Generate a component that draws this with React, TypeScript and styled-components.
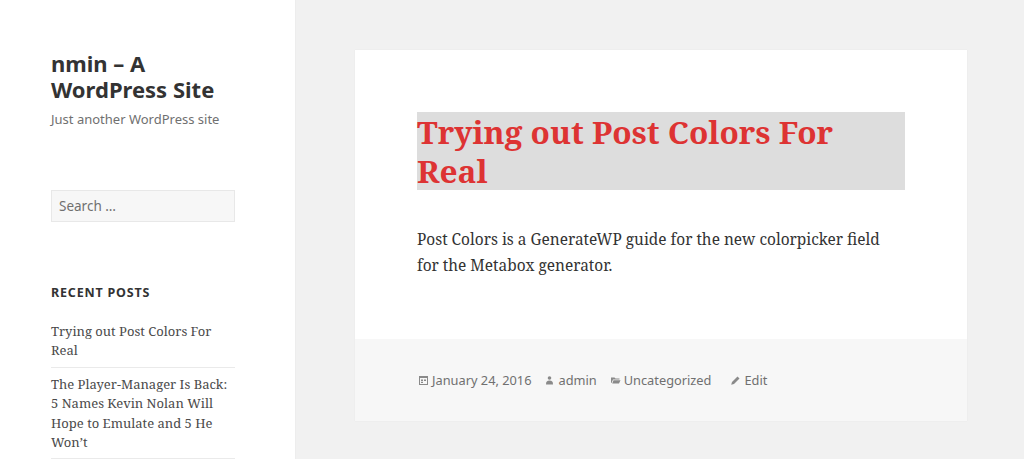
import styled, { createGlobalStyle } from "styled-components";

const GlobalStyle = createGlobalStyle`
  html, body {
    margin: 0;
    padding: 0;
    height: 459px;
    overflow: hidden;
    background: #f1f1f1;
  }
`;

const serif = `"Noto Serif", "DejaVu Serif", serif`;
const sans = `"Noto Sans", "Open Sans", sans-serif`;

const Page = styled.div`
  display: flex;
  height: 459px;
  overflow: hidden;
  background: #f1f1f1;
`;

const Sidebar = styled.aside`
  flex: 0 0 295px;
  width: 295px;
  height: 459px;
  overflow: hidden;
  box-sizing: border-box;
  padding: 50px 0 0 51px;
  background: #ffffff;
  box-shadow: 0 0 1px rgba(0, 0, 0, 0.1);
`;

const SiteTitle = styled.h1`
  width: 184px;
  margin: 0;
  font: 700 22px/26px ${sans};
  color: #333333;
`;

const Tagline = styled.p`
  margin: 7px 0 0;
  font: 400 13px/20px ${sans};
  color: #707070;
  white-space: nowrap;
`;

const SearchField = styled.div`
  width: 184px;
  height: 32px;
  box-sizing: border-box;
  margin-top: 61px;
  padding: 0 7px;
  background: #f7f7f7;
  border: 1px solid #e8e8e8;
  font: 400 13.5px/30px ${sans};
  color: #707070;
`;

const WidgetTitle = styled.h2`
  margin: 62px 0 0;
  font: 700 12.5px/18px ${sans};
  letter-spacing: 0.8px;
  text-transform: uppercase;
  color: #333333;
`;

const PostList = styled.ul`
  width: 184px;
  margin: 20px 0 0;
  padding: 0;
  list-style: none;
`;

const PostItem = styled.li`
  padding: 0 0 6px;
  margin-bottom: 7px;
  border-bottom: 1px solid #eaeaea;
  font: 400 13px/19.4px ${serif};
  color: #4a4a4a;
`;

const Main = styled.main`
  flex: 1;
  padding: 50px 0 0 60px;
`;

const Card = styled.article`
  width: 612px;
  height: 371px;
  display: flex;
  flex-direction: column;
  box-sizing: border-box;
  background: #ffffff;
  box-shadow: 0 0 1px rgba(0, 0, 0, 0.08);
`;

const CardBody = styled.div`
  flex: 1;
  padding: 62px 62px 0;
`;

const PostTitle = styled.h2`
  margin: 0;
  padding: 0;
  font: 700 31.6px/39px ${serif};
  color: #dd3333;
  background: #dddddd;
`;

const Excerpt = styled.p`
  margin: 37px 0 0;
  max-width: 480px;
  font: 400 15.43px/26px ${serif};
  color: #333333;
`;

const CardFooter = styled.footer`
  flex: 0 0 82px;
  display: flex;
  align-items: flex-start;
  box-sizing: border-box;
  padding: 31px 62px 0 63px;
  background: #f7f7f7;
`;

const Meta = styled.span<{ $gap: number }>`
  display: inline-flex;
  align-items: center;
  gap: 3px;
  margin-right: ${(p) => p.$gap}px;
  font: 400 12.8px/20px ${sans};
  color: #707070;
`;

const MetaIcon = styled.svg`
  width: 11px;
  height: 11px;
  fill: #8a8a8a;
`;

export default function App() {
  return (
    <>
      <GlobalStyle />
      <Page>
        <Sidebar>
          <SiteTitle>nmin – A WordPress Site</SiteTitle>
          <Tagline>Just another WordPress site</Tagline>
          <SearchField>Search …</SearchField>
          <WidgetTitle>Recent Posts</WidgetTitle>
          <PostList>
            <PostItem>Trying out Post Colors For Real</PostItem>
            <PostItem>
              The Player-Manager Is Back: 5 Names Kevin Nolan Will Hope to
              Emulate and 5 He Won’t
            </PostItem>
          </PostList>
        </Sidebar>
        <Main>
          <Card>
            <CardBody>
              <PostTitle>Trying out Post Colors For Real</PostTitle>
              <Excerpt>
                Post Colors is a GenerateWP guide for the new colorpicker field
                for the Metabox generator.
              </Excerpt>
            </CardBody>
            <CardFooter>
              <Meta $gap={13}>
                <MetaIcon viewBox="0 0 11 11">
                  <path
                    fillRule="evenodd"
                    d="M1 1h9v9H1zM2 3v6h7V3zM3 4.500h2v1.500H3zM6 4.500h2v1.500H6zM3 6.800h2v1.200H3z"
                  />
                </MetaIcon>
                January 24, 2016
              </Meta>
              <Meta $gap={13}>
                <MetaIcon viewBox="0 0 11 11">
                  <circle cx="5.500" cy="3" r="1.800" />
                  <path d="M2 9.500c0-3 1-4 3.500-4s3.500 1 3.500 4z" />
                </MetaIcon>
                admin
              </Meta>
              <Meta $gap={19}>
                <MetaIcon viewBox="0 0 11 11">
                  <path d="M1 2.500h3.500l1 1H9.500v1H3L1.500 8H1zM3.500 5.200H10.500L9 8.500H2.200z" />
                </MetaIcon>
                Uncategorized
              </Meta>
              <Meta $gap={0}>
                <MetaIcon viewBox="0 0 11 11">
                  <path d="M7.500 1.500l2 2-5.500 5.500-2.800.8.800-2.800z" />
                </MetaIcon>
                Edit
              </Meta>
            </CardFooter>
          </Card>
        </Main>
      </Page>
    </>
  );
}
